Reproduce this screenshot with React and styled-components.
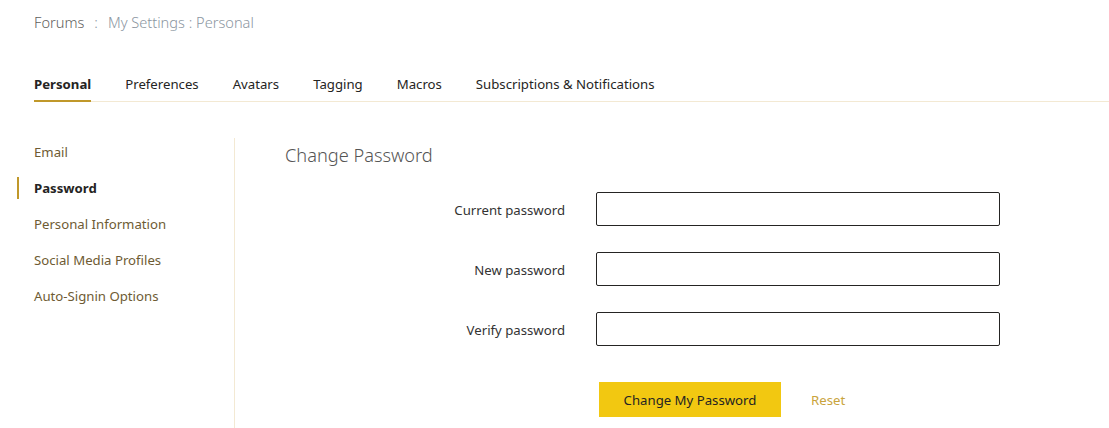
import React from "react";
import styled, { createGlobalStyle } from "styled-components";

const GlobalStyle = createGlobalStyle`
  html, body {
    margin: 0;
    padding: 0;
    background: #fff;
  }
  body {
    font-family: "Segoe UI", "Noto Sans", "Open Sans", sans-serif;
    color: #252423;
  }
`;

const Page = styled.div`
  padding-left: 17px;
`;

const Breadcrumb = styled.div`
  margin: 12px 0 0 17px;
  font-size: 14.6px;
  line-height: 20px;
  font-weight: 300;
  color: #8b96a1;
`;

const Crumb = styled.span`
  color: ${props => (props.root ? "#605e5c" : "#8b96a1")};
`;

const Sep = styled.span`
  margin: 0 10px;
`;

const TabBar = styled.nav`
  display: flex;
  margin: 42px 0 0 17px;
  border-bottom: 1px solid #f3e9d3;
`;

const Tab = styled.a`
  font-size: 13.2px;
  line-height: 20px;
  padding-bottom: 6px;
  margin-right: 34px;
  margin-bottom: -1px;
  color: #252423;
  font-weight: ${props => (props.active ? 700 : 400)};
  border-bottom: 2px solid ${props => (props.active ? "#c0982a" : "transparent")};
  cursor: pointer;
`;

const Body = styled.div`
  display: flex;
  margin-top: 36px;
  min-height: 290px;
`;

const Sidebar = styled.ul`
  list-style: none;
  margin: 0;
  padding: 3px 0 0;
  width: 217px;
  border-right: 1px solid #f3e9d3;
  display: flex;
  flex-direction: column;
  gap: 14px;
`;

const SideItem = styled.li`
  font-size: 13.2px;
  line-height: 22px;
  padding-left: 15px;
  border-left: 2px solid ${props => (props.active ? "#c0982a" : "transparent")};
  color: ${props => (props.active ? "#252423" : "#6e5b33")};
  font-weight: ${props => (props.active ? 700 : 400)};
  cursor: pointer;
`;

const Main = styled.section`
  padding: 3px 0 0 50px;
`;

const Heading = styled.h2`
  margin: 0 0 23px;
  font-size: 18.2px;
  line-height: 28px;
  font-weight: 300;
  color: #555;
`;

const Form = styled.form`
  display: grid;
  grid-template-columns: 280px 404px;
  column-gap: 31px;
  row-gap: 26px;
  align-items: center;
`;

const Label = styled.label`
  text-align: right;
  font-size: 13.2px;
  line-height: 20px;
  padding-top: 1px;
  color: #333;
`;

const Input = styled.input`
  box-sizing: border-box;
  width: 404px;
  height: 34px;
  border: 1px solid #252423;
  border-radius: 2px;
  padding: 0 8px;
  font: inherit;
  outline: none;
`;

const Actions = styled.div`
  grid-column: 2;
  display: flex;
  align-items: center;
  gap: 30px;
  margin-top: 10px;
  padding-left: 3px;
`;

const Button = styled.button`
  width: 182px;
  height: 35px;
  border: none;
  background: #f2c811;
  color: #252423;
  font-family: inherit;
  font-size: 13.2px;
  cursor: pointer;
`;

const Reset = styled.a`
  font-size: 13.2px;
  color: #c9a43c;
  cursor: pointer;
`;

const tabs = ["Personal", "Preferences", "Avatars", "Tagging", "Macros", "Subscriptions & Notifications"];
const sections = ["Email", "Password", "Personal Information", "Social Media Profiles", "Auto-Signin Options"];
const fields = ["Current password", "New password", "Verify password"];

const App = () => (
  <Page>
    <GlobalStyle />
    <Breadcrumb>
      <Crumb root>Forums</Crumb>
      <Sep>:</Sep>
      <Crumb>My Settings : Personal</Crumb>
    </Breadcrumb>
    <TabBar>
      {tabs.map(t => (
        <Tab key={t} active={t === "Personal"}>
          {t}
        </Tab>
      ))}
    </TabBar>
    <Body>
      <Sidebar>
        {sections.map(s => (
          <SideItem key={s} active={s === "Password"}>
            {s}
          </SideItem>
        ))}
      </Sidebar>
      <Main>
        <Heading>Change Password</Heading>
        <Form onSubmit={e => e.preventDefault()}>
          {fields.map(f => (
            <React.Fragment key={f}>
              <Label>{f}</Label>
              <Input type="password" />
            </React.Fragment>
          ))}
          <Actions>
            <Button type="submit">Change My Password</Button>
            <Reset>Reset</Reset>
          </Actions>
        </Form>
      </Main>
    </Body>
  </Page>
);

export default App;
